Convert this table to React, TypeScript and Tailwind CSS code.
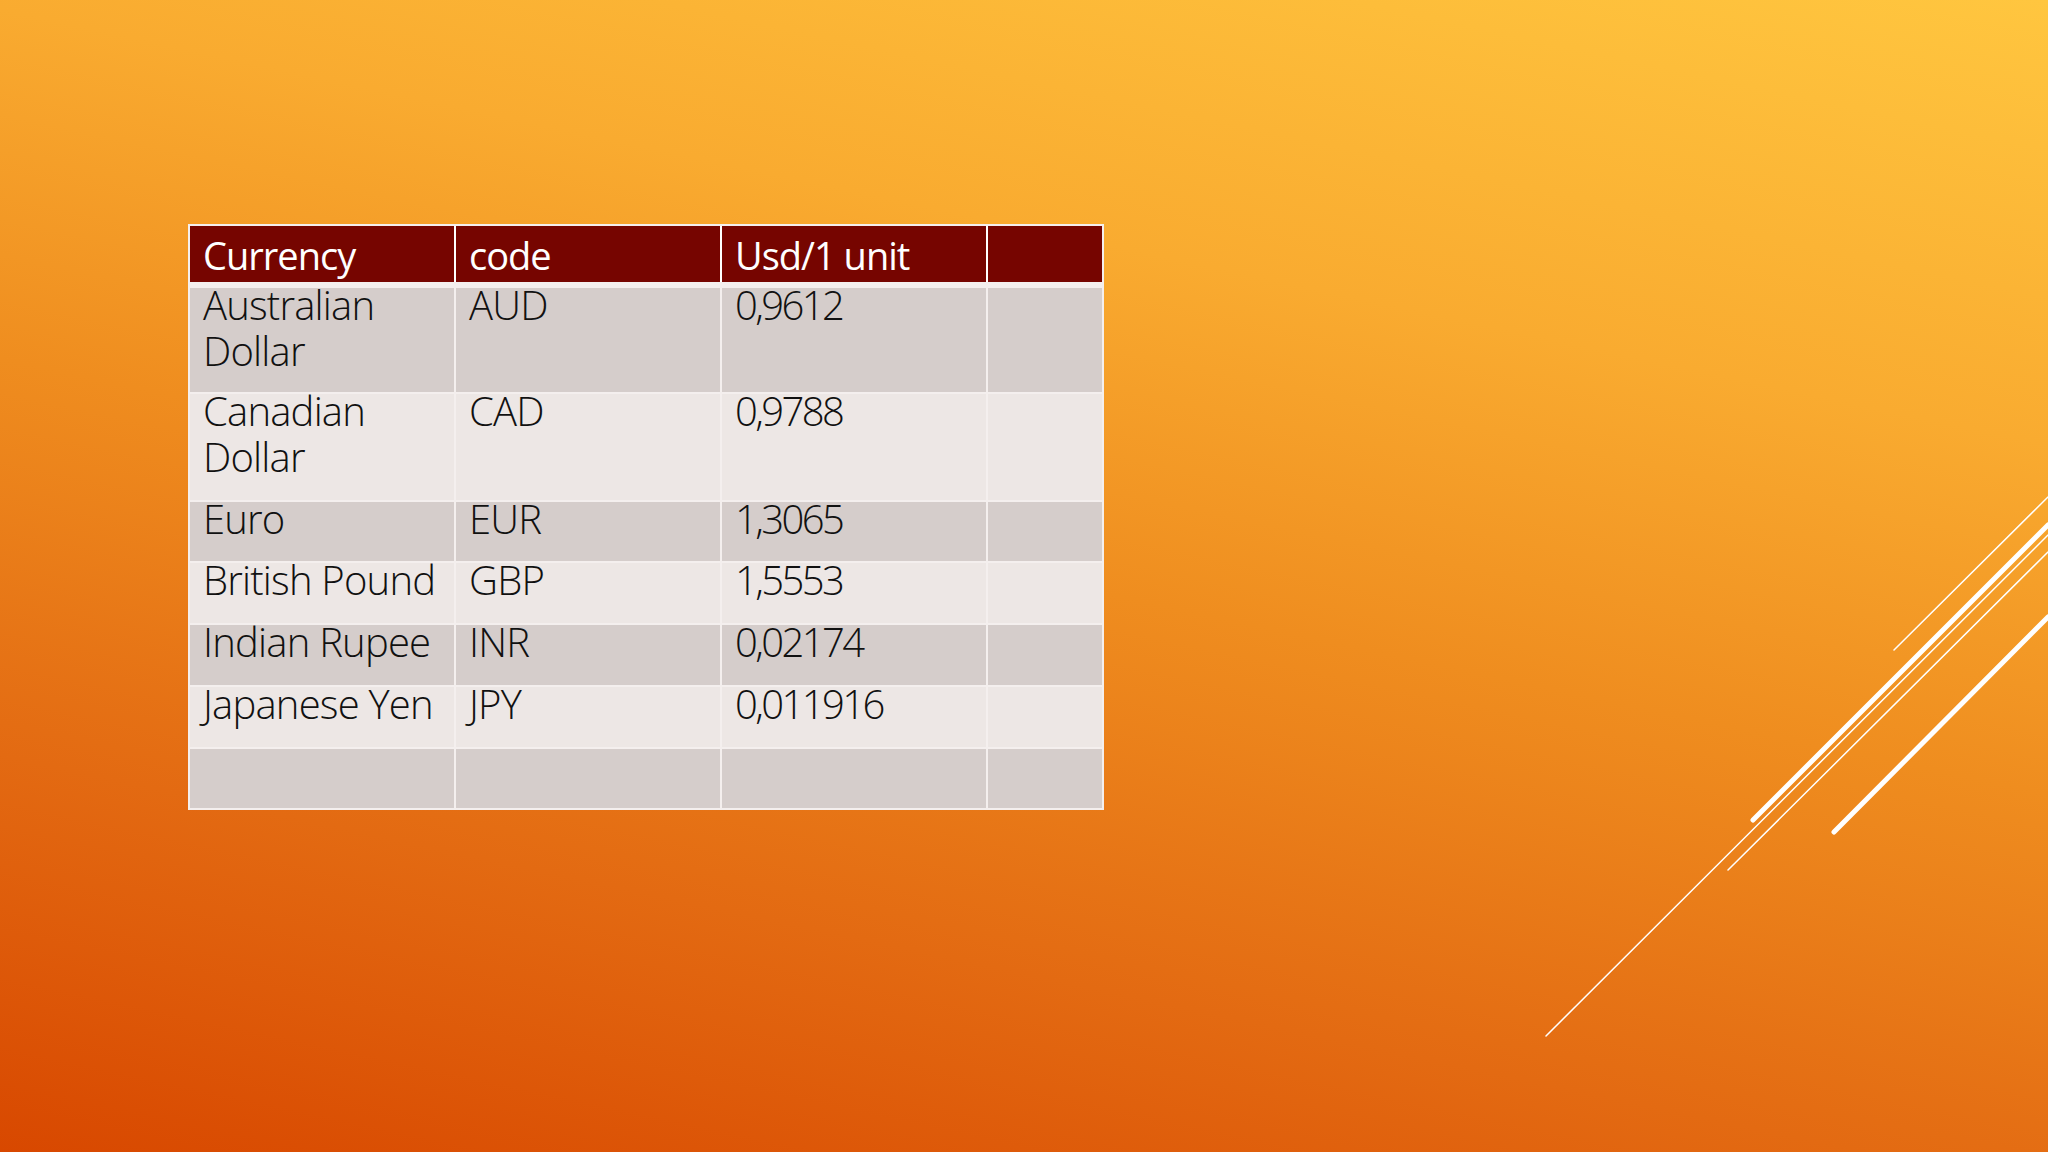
import React from 'react';

const rows: [string, string, string][] = [
  ['Australian Dollar', 'AUD', '0,9612'],
  ['Canadian Dollar', 'CAD', '0,9788'],
  ['Euro', 'EUR', '1,3065'],
  ['British Pound', 'GBP', '1,5553'],
  ['Indian Rupee', 'INR', '0,02174'],
  ['Japanese Yen', 'JPY', '0,011916'],
  ['', '', ''],
];

const rowHeights = ['h-[104px]', 'h-[106px]', 'h-[59px]', 'h-[60px]', 'h-[60px]', 'h-[60px]', 'h-[59px]'];

// per-column letter spacing, digits in Open Sans run wider than the original
const colTracking = ['tracking-[-0.8px]', 'tracking-[-0.8px]', 'tracking-[-2.6px]', ''];

const Streaks: React.FC = () => (
  <svg className="absolute inset-0 w-full h-full pointer-events-none" viewBox="0 0 2048 1152" fill="none">
    <g stroke="#ffffff" strokeLinecap="round">
      <line x1="1894" y1="650" x2="2048" y2="497" strokeWidth="1.5" />
      <line x1="1753" y1="820" x2="2048" y2="525" strokeWidth="5" />
      <line x1="1546" y1="1036" x2="2048" y2="535" strokeWidth="1.5" />
      <line x1="1728" y1="870" x2="2048" y2="552" strokeWidth="1.5" />
      <line x1="1834" y1="832" x2="2048" y2="617" strokeWidth="5" />
    </g>
  </svg>
);

const App: React.FC = () => {
  return (
    <div className="relative w-[2048px] h-[1152px] overflow-hidden bg-[linear-gradient(192deg,#ffc63f_0%,#f9ab30_28%,#ef8d1f_50%,#e36a12_75%,#d84800_100%)] font-['Open_Sans','Noto_Sans',sans-serif]">
      <Streaks />

      <div className="relative pt-[224px] pl-[188px]">
        <div className="w-[916px] bg-[#f4efee] p-[2px] flex flex-col gap-[2px]">
          {/* header */}
          <div className="grid grid-cols-[264px_264px_264px_1fr] gap-[2px] h-[56px] mb-[4px] bg-white">
            {['Currency', 'code', 'Usd/1 unit', ''].map((h, i) => (
              <div key={i} className="bg-[#760500] pl-[13px] pt-[6px] text-white text-[38px] leading-[46px] tracking-[-1px]">
                {h}
              </div>
            ))}
          </div>

          {rows.map((r, ri) => (
            <div
              key={ri}
              className={`grid grid-cols-[264px_264px_264px_1fr] gap-[2px] ${rowHeights[ri]}`}
            >
              {[...r, ''].map((c, ci) => (
                <div
                  key={ci}
                  className={`${ri % 2 === 0 ? 'bg-[#d5cdcb]' : 'bg-[#ede7e5]'} pl-[13px]`}
                >
                  <div className={`mt-[-6px] max-w-[246px] text-[40px] leading-[46px] font-light text-[#111111] ${colTracking[ci]}`}>
                    {c}
                  </div>
                </div>
              ))}
            </div>
          ))}
        </div>
      </div>
    </div>
  );
};

export default App;
